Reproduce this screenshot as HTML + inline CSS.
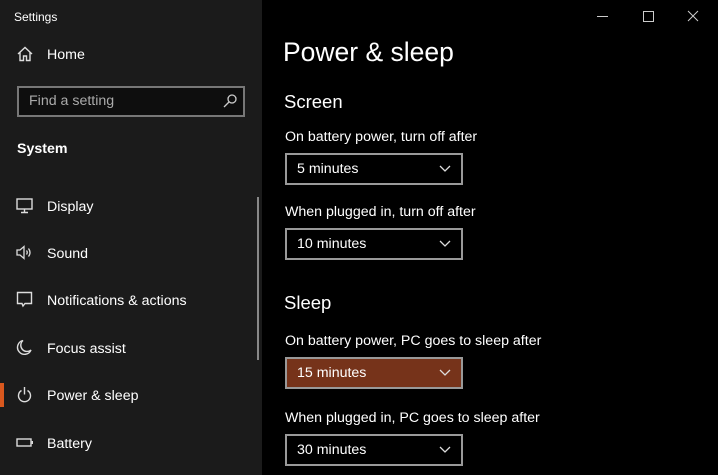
<!DOCTYPE html><html><head><style>
body{margin:0;width:718px;height:475px;overflow:hidden;background:#000;font-family:"Liberation Sans",sans-serif;color:#fff;position:relative}
.side{position:absolute;left:0;top:0;width:262px;height:475px;background:#1b1b1b}
.a{position:absolute;white-space:nowrap}
.it{font-size:14.2px;left:47px}
.ic{position:absolute;left:16px}
.dd{position:absolute;left:285px;width:174px;height:28px;border:2px solid #999;font-size:14.2px;line-height:29px;box-sizing:content-box}
.dd span{margin-left:10px}
.dd svg{position:absolute;right:10px;top:10px}
.lb{font-size:14.2px;left:285px}
</style></head><body>
<div class="side"></div>
<div class="a" style="left:14px;top:10px;font-size:12px">Settings</div>
<svg class="ic" style="top:45px" width="18" height="18" viewBox="0 0 18 18" fill="none" stroke="#ddd" stroke-width="1.4"><path d="M2 9L9 2.5 16 9M4 7.5V15.5H7.5V11H10.5V15.5H14V7.5"/></svg>
<div class="a it" style="top:47px">Home</div>
<div class="a" style="left:17px;top:86px;width:224px;height:27px;border:2px solid #777;background:#0e0e0e"></div>
<div class="a" style="left:29px;top:93px;font-size:14.2px;color:#aaa">Find a setting</div>
<svg class="a" style="left:222px;top:93px" width="16" height="16" fill="none" stroke="#ccc" stroke-width="1.3"><circle cx="10" cy="6" r="4"/><path d="M7 9L2 14"/></svg>
<div class="a" style="left:17px;top:141px;font-size:14.2px;font-weight:bold">System</div>
<div class="a" style="left:257px;top:197px;width:2px;height:163px;background:#888"></div>
<svg class="ic" style="top:197px" width="18" height="18" fill="none" stroke="#ddd" stroke-width="1.4"><rect x="1" y="2" width="15" height="10"/><path d="M8.5 12V15M5 15.5H12"/></svg>
<div class="a it" style="top:199px">Display</div>
<svg class="ic" style="top:244px" width="18" height="18" fill="none" stroke="#ddd" stroke-width="1.3"><path d="M1 6H4L8 2.5V14.5L4 11H1Z"/><path d="M10.5 6.5Q12 8.5 10.5 10.5M12.5 4.5Q15.5 8.5 12.5 12.5"/></svg>
<div class="a it" style="top:246px">Sound</div>
<svg class="ic" style="top:291px" width="18" height="18" fill="none" stroke="#ddd" stroke-width="1.4"><path d="M1.5 1.5H15.5V12.5H9L7 15 6 12.5H1.5Z"/></svg>
<div class="a it" style="top:293px">Notifications &amp; actions</div>
<svg class="ic" style="top:339px" width="18" height="18" fill="none" stroke="#ddd" stroke-width="1.4"><path d="M7 1.5A7 7 0 1 0 15 11 6 6 0 0 1 7 1.5Z"/></svg>
<div class="a it" style="top:341px">Focus assist</div>
<div class="a" style="left:0;top:383px;width:4px;height:24px;background:#d9581e"></div>
<svg class="ic" style="top:386px" width="18" height="18" fill="none" stroke="#ddd" stroke-width="1.4"><path d="M5.5 4.5A6 6 0 1 0 11.5 4.5M8.5 1V8.5"/></svg>
<div class="a it" style="top:388px">Power &amp; sleep</div>
<svg class="ic" style="top:434px" width="18" height="18" fill="none" stroke="#ddd" stroke-width="1.4"><rect x="1" y="5" width="14" height="7"/><path d="M16.3 7V10"/></svg>
<div class="a it" style="top:436px">Battery</div>
<div class="a" style="left:597px;top:16px;width:11px;height:1px;background:#ccc"></div>
<div class="a" style="left:643px;top:11px;width:9px;height:9px;border:1px solid #ccc"></div>
<svg class="a" style="left:687px;top:10px" width="12" height="12" stroke="#ccc" stroke-width="1"><path d="M1 1L11 11M11 1L1 11"/></svg>
<div class="a" style="left:283px;top:37px;font-size:26.5px">Power &amp; sleep</div>
<div class="a" style="left:284px;top:91px;font-size:18.5px">Screen</div>
<div class="a lb" style="top:129px">On battery power, turn off after</div>
<div class="dd" style="top:153px"><span>5 minutes</span><svg width="12" height="8" fill="none" stroke="#ddd" stroke-width="1.3"><path d="M1 1L6 6 11 1"/></svg></div>
<div class="a lb" style="top:204px">When plugged in, turn off after</div>
<div class="dd" style="top:228px"><span>10 minutes</span><svg width="12" height="8" fill="none" stroke="#ddd" stroke-width="1.3"><path d="M1 1L6 6 11 1"/></svg></div>
<div class="a" style="left:284px;top:292px;font-size:18.5px">Sleep</div>
<div class="a lb" style="top:333px">On battery power, PC goes to sleep after</div>
<div class="dd" style="top:357px;background:#76331a;border-color:#999"><span>15 minutes</span><svg width="12" height="8" fill="none" stroke="#ddd" stroke-width="1.3"><path d="M1 1L6 6 11 1"/></svg></div>
<div class="a lb" style="top:410px">When plugged in, PC goes to sleep after</div>
<div class="dd" style="top:434px"><span>30 minutes</span><svg width="12" height="8" fill="none" stroke="#ddd" stroke-width="1.3"><path d="M1 1L6 6 11 1"/></svg></div>
</body></html>
